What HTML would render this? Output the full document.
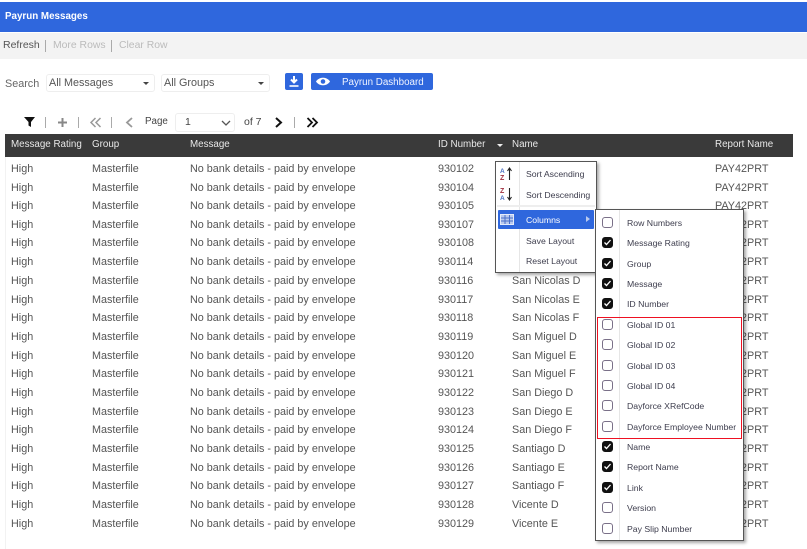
<!DOCTYPE html>
<html><head><meta charset="utf-8">
<style>
html,body{margin:0;padding:0;background:#fff}
body{width:807px;height:549px;overflow:hidden;position:relative;font-family:"Liberation Sans",sans-serif;font-size:10.8px;color:#555}
.a{position:absolute;white-space:nowrap}
#rows{position:absolute;left:0;top:1px}
.cell{position:absolute;white-space:nowrap;line-height:14px}
.hd{position:absolute;top:138px;line-height:14px;color:#e8e8e8;font-size:9.8px;white-space:nowrap}
.sep{position:absolute;width:1px;background:#aaa}
.sel{position:absolute;background:#fff;border:1px solid #eee;border-radius:3px;box-sizing:border-box;font-size:10.8px;color:#555;line-height:17px;padding-left:2px}
.menu{position:absolute;background:#fff;border:1px solid #555;box-shadow:2px 2px 3px rgba(0,0,0,.35);box-sizing:border-box}
.mt{position:absolute;font-size:8.7px;color:#3d3d4d;white-space:nowrap;line-height:12px}
.cb{position:absolute;left:602px;width:9px;height:9px;border:1px solid #7a7088;border-radius:3px;background:#fff}
.cb.on{background:#111;border-color:#111}
.cb.on svg{position:absolute;left:0;top:0}
.red{position:absolute;background:#ee1122;z-index:5}
</style></head><body>
<div class="a" style="left:0;top:2px;width:807px;height:30px;background:#2f67dd"></div>
<div class="a" style="left:5px;top:10px;color:#fff;font-weight:bold;font-size:9.8px;line-height:13px">Payrun Messages</div>
<div class="a" style="left:0;top:33px;width:807px;height:26px;background:#f3f3f3"></div>
<div class="a" style="left:3px;top:39px;font-size:10.5px;line-height:13px;color:#555">Refresh</div>
<div class="sep" style="left:45px;top:40px;height:12px"></div>
<div class="a" style="left:53px;top:39px;font-size:10.4px;line-height:13px;color:#bbb">More Rows</div>
<div class="sep" style="left:111px;top:40px;height:12px"></div>
<div class="a" style="left:119px;top:39px;font-size:10.4px;line-height:13px;color:#bbb">Clear Row</div>

<div class="a" style="left:5px;top:77px;font-size:10.8px;line-height:14px;color:#666">Search</div>
<div class="sel" style="left:46px;top:74px;width:109px;height:18px">All Messages</div>
<div class="a" style="left:143px;top:82px;border:3px solid transparent;border-top:3px solid #444"></div>
<div class="sel" style="left:161px;top:74px;width:109px;height:18px">All Groups</div>
<div class="a" style="left:258px;top:82px;border:3px solid transparent;border-top:3px solid #444"></div>

<div class="a" style="left:285px;top:73px;width:18px;height:17px;background:#2f67dd;border-radius:2px"></div>
<svg class="a" style="left:285px;top:73px" width="18" height="17"><path d="M9 3v6M6 6.500l3 3 3-3" stroke="#fff" stroke-width="2" fill="none"/><path d="M4.500 13h9" stroke="#fff" stroke-width="1.600"/></svg>
<div class="a" style="left:311px;top:73px;width:122px;height:17px;background:#2f67dd;border-radius:2px"></div>
<svg class="a" style="left:315px;top:75px" width="16" height="13"><path d="M1 6.500C4 1.500 12 1.500 15 6.500 12 11.500 4 11.500 1 6.500z" fill="#fff"/><circle cx="8" cy="6.500" r="2.300" fill="#2f67dd"/></svg>
<div class="a" style="left:342px;top:76px;color:#f0f4ff;font-size:9.8px;line-height:13px">Payrun Dashboard</div>

<svg class="a" style="left:24px;top:116px" width="12" height="12"><path d="M0 1h11L7 6v5L4.500 9.500V6z" fill="#111"/></svg>
<div class="sep" style="left:45px;top:117px;height:11px"></div>
<svg class="a" style="left:57px;top:117px" width="11" height="11"><path d="M5.500 1v9M1 5.500h9" stroke="#888" stroke-width="2"/></svg>
<div class="sep" style="left:78px;top:117px;height:11px"></div>
<svg class="a" style="left:89px;top:117px" width="14" height="11"><path d="M6.500 1L2 5.500 6.500 10M11.500 1L7 5.500 11.500 10" stroke="#999" stroke-width="1.500" fill="none"/></svg>
<div class="sep" style="left:111px;top:117px;height:11px"></div>
<svg class="a" style="left:124px;top:117px" width="10" height="11"><path d="M8 1L3 5.500 8 10" stroke="#999" stroke-width="1.800" fill="none"/></svg>
<div class="a" style="left:145px;top:115px;font-size:9.8px;line-height:13px;color:#444">Page</div>
<div class="sel" style="left:175px;top:113px;width:60px;height:19px;padding-left:9px;font-size:10.5px;color:#444">1</div>
<svg class="a" style="left:221px;top:119px" width="10" height="8"><path d="M1 2l4 4 4-4" stroke="#555" stroke-width="1.300" fill="none"/></svg>
<div class="a" style="left:244px;top:116px;font-size:10.5px;line-height:13px;color:#444">of 7</div>
<svg class="a" style="left:274px;top:117px" width="10" height="11"><path d="M2 1l5 4.500L2 10" stroke="#111" stroke-width="2" fill="none"/></svg>
<div class="sep" style="left:294px;top:117px;height:11px"></div>
<svg class="a" style="left:306px;top:117px" width="13" height="11"><path d="M1.500 1L6 5.500 1.500 10M6.500 1L11 5.500 6.500 10" stroke="#111" stroke-width="1.800" fill="none"/></svg>

<div class="a" style="left:5px;top:134px;width:788px;height:23px;background:#3a3a3a"></div>
<div class="a" style="left:5px;top:157px;width:1px;height:392px;background:#f2f2f2"></div>
<div class="hd" style="left:11px">Message Rating</div>
<div class="hd" style="left:92px">Group</div>
<div class="hd" style="left:190px">Message</div>
<div class="hd" style="left:438px">ID Number</div>
<div class="a" style="left:497px;top:144px;border:3.500px solid transparent;border-top:3.500px solid #eee"></div>
<div class="hd" style="left:512px">Name</div>
<div class="hd" style="left:715px">Report Name</div>

<div id="rows">
<div class="cell" style="left:11px;top:161px">High</div><div class="cell" style="left:92px;top:161px">Masterfile</div><div class="cell" style="left:190px;top:161px">No bank details - paid by envelope</div><div class="cell" style="left:438px;top:161px">930102</div><div class="cell" style="left:715px;top:161px">PAY42PRT</div>
<div class="cell" style="left:11px;top:180px">High</div><div class="cell" style="left:92px;top:180px">Masterfile</div><div class="cell" style="left:190px;top:180px">No bank details - paid by envelope</div><div class="cell" style="left:438px;top:180px">930104</div><div class="cell" style="left:715px;top:180px">PAY42PRT</div>
<div class="cell" style="left:11px;top:198px">High</div><div class="cell" style="left:92px;top:198px">Masterfile</div><div class="cell" style="left:190px;top:198px">No bank details - paid by envelope</div><div class="cell" style="left:438px;top:198px">930105</div><div class="cell" style="left:715px;top:198px">PAY42PRT</div>
<div class="cell" style="left:11px;top:217px">High</div><div class="cell" style="left:92px;top:217px">Masterfile</div><div class="cell" style="left:190px;top:217px">No bank details - paid by envelope</div><div class="cell" style="left:438px;top:217px">930107</div><div class="cell" style="left:715px;top:217px">PAY42PRT</div>
<div class="cell" style="left:11px;top:235px">High</div><div class="cell" style="left:92px;top:235px">Masterfile</div><div class="cell" style="left:190px;top:235px">No bank details - paid by envelope</div><div class="cell" style="left:438px;top:235px">930108</div><div class="cell" style="left:715px;top:235px">PAY42PRT</div>
<div class="cell" style="left:11px;top:254px">High</div><div class="cell" style="left:92px;top:254px">Masterfile</div><div class="cell" style="left:190px;top:254px">No bank details - paid by envelope</div><div class="cell" style="left:438px;top:254px">930114</div><div class="cell" style="left:715px;top:254px">PAY42PRT</div>
<div class="cell" style="left:11px;top:273px">High</div><div class="cell" style="left:92px;top:273px">Masterfile</div><div class="cell" style="left:190px;top:273px">No bank details - paid by envelope</div><div class="cell" style="left:438px;top:273px">930116</div><div class="cell" style="left:512px;top:273px">San Nicolas D</div><div class="cell" style="left:715px;top:273px">PAY42PRT</div>
<div class="cell" style="left:11px;top:292px">High</div><div class="cell" style="left:92px;top:292px">Masterfile</div><div class="cell" style="left:190px;top:292px">No bank details - paid by envelope</div><div class="cell" style="left:438px;top:292px">930117</div><div class="cell" style="left:512px;top:292px">San Nicolas E</div><div class="cell" style="left:715px;top:292px">PAY42PRT</div>
<div class="cell" style="left:11px;top:310px">High</div><div class="cell" style="left:92px;top:310px">Masterfile</div><div class="cell" style="left:190px;top:310px">No bank details - paid by envelope</div><div class="cell" style="left:438px;top:310px">930118</div><div class="cell" style="left:512px;top:310px">San Nicolas F</div><div class="cell" style="left:715px;top:310px">PAY42PRT</div>
<div class="cell" style="left:11px;top:329px">High</div><div class="cell" style="left:92px;top:329px">Masterfile</div><div class="cell" style="left:190px;top:329px">No bank details - paid by envelope</div><div class="cell" style="left:438px;top:329px">930119</div><div class="cell" style="left:512px;top:329px">San Miguel D</div><div class="cell" style="left:715px;top:329px">PAY42PRT</div>
<div class="cell" style="left:11px;top:348px">High</div><div class="cell" style="left:92px;top:348px">Masterfile</div><div class="cell" style="left:190px;top:348px">No bank details - paid by envelope</div><div class="cell" style="left:438px;top:348px">930120</div><div class="cell" style="left:512px;top:348px">San Miguel E</div><div class="cell" style="left:715px;top:348px">PAY42PRT</div>
<div class="cell" style="left:11px;top:366px">High</div><div class="cell" style="left:92px;top:366px">Masterfile</div><div class="cell" style="left:190px;top:366px">No bank details - paid by envelope</div><div class="cell" style="left:438px;top:366px">930121</div><div class="cell" style="left:512px;top:366px">San Miguel F</div><div class="cell" style="left:715px;top:366px">PAY42PRT</div>
<div class="cell" style="left:11px;top:385px">High</div><div class="cell" style="left:92px;top:385px">Masterfile</div><div class="cell" style="left:190px;top:385px">No bank details - paid by envelope</div><div class="cell" style="left:438px;top:385px">930122</div><div class="cell" style="left:512px;top:385px">San Diego D</div><div class="cell" style="left:715px;top:385px">PAY42PRT</div>
<div class="cell" style="left:11px;top:404px">High</div><div class="cell" style="left:92px;top:404px">Masterfile</div><div class="cell" style="left:190px;top:404px">No bank details - paid by envelope</div><div class="cell" style="left:438px;top:404px">930123</div><div class="cell" style="left:512px;top:404px">San Diego E</div><div class="cell" style="left:715px;top:404px">PAY42PRT</div>
<div class="cell" style="left:11px;top:422px">High</div><div class="cell" style="left:92px;top:422px">Masterfile</div><div class="cell" style="left:190px;top:422px">No bank details - paid by envelope</div><div class="cell" style="left:438px;top:422px">930124</div><div class="cell" style="left:512px;top:422px">San Diego F</div><div class="cell" style="left:715px;top:422px">PAY42PRT</div>
<div class="cell" style="left:11px;top:441px">High</div><div class="cell" style="left:92px;top:441px">Masterfile</div><div class="cell" style="left:190px;top:441px">No bank details - paid by envelope</div><div class="cell" style="left:438px;top:441px">930125</div><div class="cell" style="left:512px;top:441px">Santiago D</div><div class="cell" style="left:715px;top:441px">PAY42PRT</div>
<div class="cell" style="left:11px;top:460px">High</div><div class="cell" style="left:92px;top:460px">Masterfile</div><div class="cell" style="left:190px;top:460px">No bank details - paid by envelope</div><div class="cell" style="left:438px;top:460px">930126</div><div class="cell" style="left:512px;top:460px">Santiago E</div><div class="cell" style="left:715px;top:460px">PAY42PRT</div>
<div class="cell" style="left:11px;top:478px">High</div><div class="cell" style="left:92px;top:478px">Masterfile</div><div class="cell" style="left:190px;top:478px">No bank details - paid by envelope</div><div class="cell" style="left:438px;top:478px">930127</div><div class="cell" style="left:512px;top:478px">Santiago F</div><div class="cell" style="left:715px;top:478px">PAY42PRT</div>
<div class="cell" style="left:11px;top:497px">High</div><div class="cell" style="left:92px;top:497px">Masterfile</div><div class="cell" style="left:190px;top:497px">No bank details - paid by envelope</div><div class="cell" style="left:438px;top:497px">930128</div><div class="cell" style="left:512px;top:497px">Vicente D</div><div class="cell" style="left:715px;top:497px">PAY42PRT</div>
<div class="cell" style="left:11px;top:516px">High</div><div class="cell" style="left:92px;top:516px">Masterfile</div><div class="cell" style="left:190px;top:516px">No bank details - paid by envelope</div><div class="cell" style="left:438px;top:516px">930129</div><div class="cell" style="left:512px;top:516px">Vicente E</div><div class="cell" style="left:715px;top:516px">PAY42PRT</div>
</div>

<!-- context menu -->
<div class="menu" style="left:495px;top:161px;width:102px;height:112px"></div>
<div class="a" style="left:519px;top:162px;width:1px;height:110px;background:#e6e6e6"></div>
<div class="a" style="left:497px;top:205px;width:98px;height:2px;background:#eee"></div>
<svg class="a" style="left:499px;top:166px" width="16" height="50"><text x="1" y="7" font-size="6.500" font-weight="bold" fill="#4a6fc0" font-family="Liberation Sans">A</text><text x="1" y="14" font-size="7" font-weight="bold" fill="#a03040" font-family="Liberation Sans">Z</text><path d="M10.500 14V3M8.500 5l2-3 2 3" stroke="#222" stroke-width="1.100" fill="none"/><text x="1" y="27" font-size="7" font-weight="bold" fill="#a03040" font-family="Liberation Sans">Z</text><text x="1" y="34" font-size="6.500" font-weight="bold" fill="#4a6fc0" font-family="Liberation Sans">A</text><path d="M10.500 22v11M8.500 31l2 3 2-3" stroke="#222" stroke-width="1.100" fill="none"/></svg>
<div class="mt" style="left:526px;top:168px">Sort Ascending</div>
<div class="mt" style="left:526px;top:189px">Sort Descending</div>
<div class="a" style="left:498px;top:210px;width:96px;height:19px;background:#2f67dd;border-radius:1px"></div>
<svg class="a" style="left:500px;top:214px" width="14" height="11"><rect x=".5" y=".5" width="13" height="10" fill="#b8c9ee" stroke="#e4ebfa"/><path d="M5 1v9M9.500 1v9M1 4h12M1 7h12" stroke="#4a6fc8" stroke-width="1"/></svg>
<div class="mt" style="left:526px;top:214px;color:#fff">Columns</div>
<div class="a" style="left:586px;top:216px;border:3px solid transparent;border-left:4px solid #b8c9ee"></div>
<div class="mt" style="left:526px;top:235px">Save Layout</div>
<div class="mt" style="left:526px;top:255px">Reset Layout</div>

<!-- submenu -->
<div class="menu" style="left:595px;top:209px;width:149px;height:332px"></div>
<div class="a" style="left:619px;top:210px;width:1px;height:330px;background:#e6e6e6"></div>

<div class="cb" style="top:217px"></div><div class="mt" style="left:627px;top:217px">Row Numbers</div>
<div class="cb on" style="top:237px"><svg width="9" height="9"><path d="M1.500 4.500l2 2 4-4.500" stroke="#fff" stroke-width="1.300" fill="none"/></svg></div><div class="mt" style="left:627px;top:237px">Message Rating</div>
<div class="cb on" style="top:258px"><svg width="9" height="9"><path d="M1.500 4.500l2 2 4-4.500" stroke="#fff" stroke-width="1.300" fill="none"/></svg></div><div class="mt" style="left:627px;top:258px">Group</div>
<div class="cb on" style="top:278px"><svg width="9" height="9"><path d="M1.500 4.500l2 2 4-4.500" stroke="#fff" stroke-width="1.300" fill="none"/></svg></div><div class="mt" style="left:627px;top:278px">Message</div>
<div class="cb on" style="top:298px"><svg width="9" height="9"><path d="M1.500 4.500l2 2 4-4.500" stroke="#fff" stroke-width="1.300" fill="none"/></svg></div><div class="mt" style="left:627px;top:298px">ID Number</div>
<div class="cb" style="top:319px"></div><div class="mt" style="left:627px;top:319px">Global ID 01</div>
<div class="cb" style="top:339px"></div><div class="mt" style="left:627px;top:339px">Global ID 02</div>
<div class="cb" style="top:360px"></div><div class="mt" style="left:627px;top:360px">Global ID 03</div>
<div class="cb" style="top:380px"></div><div class="mt" style="left:627px;top:380px">Global ID 04</div>
<div class="cb" style="top:400px"></div><div class="mt" style="left:627px;top:400px">Dayforce XRefCode</div>
<div class="cb" style="top:421px"></div><div class="mt" style="left:627px;top:421px">Dayforce Employee Number</div>
<div class="cb on" style="top:441px"><svg width="9" height="9"><path d="M1.500 4.500l2 2 4-4.500" stroke="#fff" stroke-width="1.300" fill="none"/></svg></div><div class="mt" style="left:627px;top:441px">Name</div>
<div class="cb on" style="top:461px"><svg width="9" height="9"><path d="M1.500 4.500l2 2 4-4.500" stroke="#fff" stroke-width="1.300" fill="none"/></svg></div><div class="mt" style="left:627px;top:461px">Report Name</div>
<div class="cb on" style="top:482px"><svg width="9" height="9"><path d="M1.500 4.500l2 2 4-4.500" stroke="#fff" stroke-width="1.300" fill="none"/></svg></div><div class="mt" style="left:627px;top:482px">Link</div>
<div class="cb" style="top:502px"></div><div class="mt" style="left:627px;top:502px">Version</div>
<div class="cb" style="top:523px"></div><div class="mt" style="left:627px;top:523px">Pay Slip Number</div>

<div class="red" style="left:597px;top:317px;width:145px;height:1px"></div>
<div class="red" style="left:597px;top:438px;width:145px;height:1px"></div>
<div class="red" style="left:597px;top:317px;width:1px;height:122px"></div>
<div class="red" style="left:741px;top:317px;width:1px;height:122px"></div>
</body></html>
